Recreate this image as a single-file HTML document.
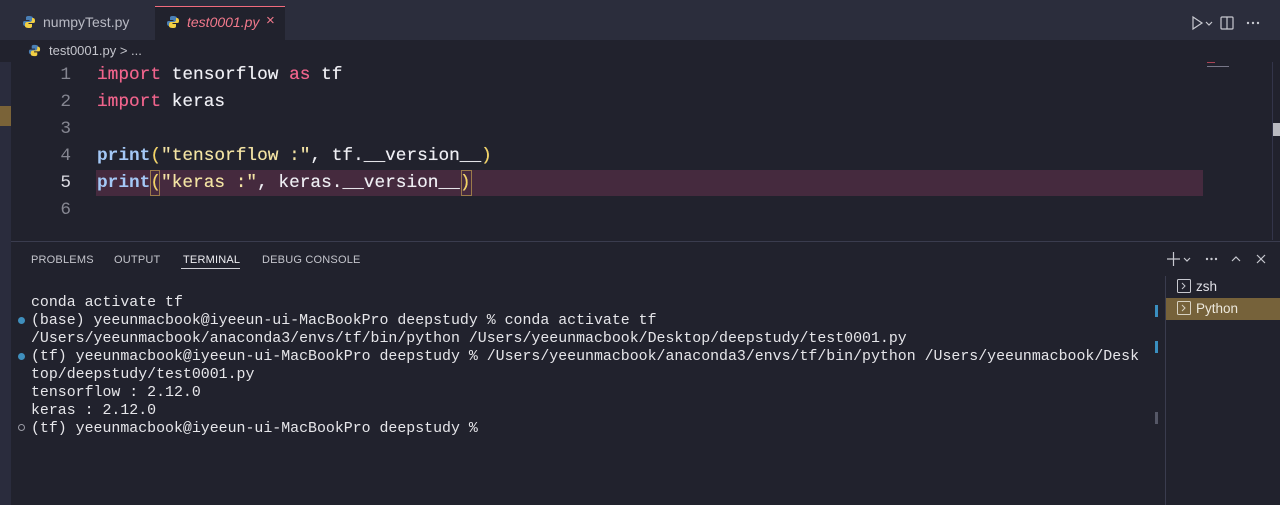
<!DOCTYPE html><html><head><style>
*{margin:0;padding:0;box-sizing:border-box}
body{width:1280px;height:505px;background:#21222d;overflow:hidden;position:relative;font-family:"Liberation Sans",sans-serif}
.a{position:absolute}
.mono{font-family:"Liberation Mono","DejaVu Sans Mono",monospace}
.code{font-size:17.8px;line-height:27px;white-space:pre;color:#eeeef3;text-shadow:0 0 .4px #eeeef3}
.k{color:#f0648c;text-shadow:0 0 .4px #f0648c}.p{color:#a4c8f6;font-weight:bold;text-shadow:none}.s{color:#f3e3a3;text-shadow:0 0 .4px #f3e3a3}.b{color:#f4d35e}
.ln{font-size:17.8px;line-height:27px;color:#858691;text-align:right;width:40px}
.term{font-size:14.9px;line-height:18px;color:#e6e6ea;white-space:pre}
.tab{font-size:11px;color:#c4c5cc;letter-spacing:.2px}
</style></head><body>
<div class="a" style="left:0;top:0;width:1280px;height:40px;background:#2b2d3c"></div>
<div class="a" style="left:155px;top:6px;width:130px;height:35px;background:#21222d;border-top:1px solid #f16b7d"></div>
<svg class="a" style="left:22px;top:15px" width="14" height="14" viewBox="0 0 14 14"><path d="M7 1C4 1 4 2 4 3v2h3.5v1H2.5C1 6 1 7.5 1 8.5S1.5 11 3 11h1V9c0-1 1-2 2-2h3c1 0 2-1 2-2V3C11 1.5 9 1 7 1z" fill="#4a7fb5"/><path d="M7 13c3 0 3-1 3-2V9H6.5V8h5c1.5 0 1.5-1.5 1.5-2.5S12.5 3 11 3h-1v2c0 1-1 2-2 2H5C4 7 3 8 3 9v2c0 1.5 2 2 4 2z" fill="#f2cf43"/></svg>
<div class="a" style="left:43px;top:14px;font-size:14px;color:#b9bac4">numpyTest.py</div>
<svg class="a" style="left:166px;top:15px" width="14" height="14" viewBox="0 0 14 14"><path d="M7 1C4 1 4 2 4 3v2h3.5v1H2.5C1 6 1 7.5 1 8.5S1.5 11 3 11h1V9c0-1 1-2 2-2h3c1 0 2-1 2-2V3C11 1.5 9 1 7 1z" fill="#4a7fb5"/><path d="M7 13c3 0 3-1 3-2V9H6.5V8h5c1.5 0 1.5-1.5 1.5-2.5S12.5 3 11 3h-1v2c0 1-1 2-2 2H5C4 7 3 8 3 9v2c0 1.5 2 2 4 2z" fill="#f2cf43"/></svg>
<div class="a" style="left:187px;top:14px;font-size:14px;color:#f2798c;font-style:italic">test0001.py</div>
<div class="a" style="left:266px;top:12px;font-size:15px;color:#f2798c">×</div>
<svg class="a" style="left:1190px;top:15px" width="90" height="16" viewBox="0 0 90 16" fill="none" stroke="#c8c9d0" stroke-width="1.2"><path d="M3 2l9 6-9 6z"/><path d="M16 7l3 3 3-3"/><rect x="31" y="2" width="12" height="12" rx="1"/><path d="M37 2v12"/><circle cx="58" cy="8" r=".6" fill="#c8c9d0"/><circle cx="63" cy="8" r=".6" fill="#c8c9d0"/><circle cx="68" cy="8" r=".6" fill="#c8c9d0"/></svg>
<svg class="a" style="left:28px;top:44px" width="13" height="13" viewBox="0 0 14 14"><path d="M7 1C4 1 4 2 4 3v2h3.5v1H2.5C1 6 1 7.5 1 8.5S1.5 11 3 11h1V9c0-1 1-2 2-2h3c1 0 2-1 2-2V3C11 1.5 9 1 7 1z" fill="#4a7fb5"/><path d="M7 13c3 0 3-1 3-2V9H6.5V8h5c1.5 0 1.5-1.5 1.5-2.5S12.5 3 11 3h-1v2c0 1-1 2-2 2H5C4 7 3 8 3 9v2c0 1.5 2 2 4 2z" fill="#f2cf43"/></svg>
<div class="a" style="left:49px;top:43px;font-size:13px;color:#c4c5cc">test0001.py &gt; ...</div>
<div class="a" style="left:0;top:62px;width:11px;height:443px;background:#2a2c3d"></div>
<div class="a" style="left:0;top:106px;width:11px;height:20px;background:#7a6338"></div>
<div class="a" style="left:1207px;top:62px;width:8px;height:1px;background:#a45"></div>
<div class="a" style="left:1207px;top:66px;width:22px;height:1px;background:#778"></div>
<div class="a" style="left:1272px;top:62px;width:1px;height:178px;background:#33354a"></div>
<div class="a" style="left:1273px;top:123px;width:7px;height:13px;background:#b9bac0"></div>
<div class="a" style="left:96px;top:170px;width:1107px;height:26px;background:#452a3e"></div>
<div class="a" style="left:150px;top:170px;width:10px;height:26px;border:1px solid #9b7a4a"></div>
<div class="a" style="left:461px;top:170px;width:11px;height:26px;border:1px solid #9b7a4a"></div>
<div class="a mono ln" style="left:31px;top:62px">1<br>2<br>3<br>4<br><span style="color:#dcdce3">5</span><br>6</div>
<div class="a mono code" style="left:97px;top:62px"><span class="k">import</span> tensorflow <span class="k">as</span> tf
<span class="k">import</span> keras

<span class="p">print</span><span class="b">(</span><span class="s">"tensorflow :"</span>, tf.__version__<span class="b">)</span>
<span class="p">print</span><span class="b">(</span><span class="s">"keras :"</span>, keras.__version__<span class="b">)</span>
</div>
<div class="a" style="left:11px;top:241px;width:1269px;height:1px;background:#3a3c4e"></div>
<div class="a tab" style="left:31px;top:254px">PROBLEMS</div>
<div class="a tab" style="left:114px;top:254px">OUTPUT</div>
<div class="a tab" style="left:183px;top:254px;color:#eeeef2">TERMINAL</div>
<div class="a" style="left:181px;top:268px;width:59px;height:1px;background:#d0d0d6"></div>
<div class="a tab" style="left:262px;top:254px">DEBUG CONSOLE</div>
<svg class="a" style="left:1165px;top:250px" width="115" height="18" viewBox="0 0 115 18" fill="none" stroke="#c8c9d0" stroke-width="1.2"><path d="M2 9h13M8.5 2v14"/><path d="M19 8l3 3 3-3"/><circle cx="42" cy="9" r=".6" fill="#c8c9d0"/><circle cx="46.5" cy="9" r=".6" fill="#c8c9d0"/><circle cx="51" cy="9" r=".6" fill="#c8c9d0"/><path d="M67 11l4-4 4 4"/><path d="M92 5l8 8M100 5l-8 8"/></svg>
<div class="a" style="left:1165px;top:276px;width:1px;height:229px;background:#3a3c4e"></div>
<div class="a" style="left:1166px;top:298px;width:114px;height:22px;background:#76623a"></div>
<svg class="a" style="left:1177px;top:279px" width="14" height="14" viewBox="0 0 14 14" fill="none" stroke="#c8c9d0"><rect x=".5" y=".5" width="13" height="13" rx="1"/><path d="M5 4l3 3-3 3"/></svg>
<div class="a" style="left:1196px;top:279px;font-size:13.5px;color:#e0e0e6">zsh</div>
<svg class="a" style="left:1177px;top:301px" width="14" height="14" viewBox="0 0 14 14" fill="none" stroke="#d8d2c2"><rect x=".5" y=".5" width="13" height="13" rx="1"/><path d="M5 4l3 3-3 3"/></svg>
<div class="a" style="left:1196px;top:301px;font-size:13.5px;color:#ece8dc">Python</div>
<div class="a" style="left:1155px;top:305px;width:3px;height:12px;background:#3a8fc0"></div>
<div class="a" style="left:1155px;top:341px;width:3px;height:12px;background:#3a8fc0"></div>
<div class="a" style="left:1155px;top:412px;width:3px;height:12px;background:#555766"></div>
<div class="a" style="left:18px;top:317px;width:7px;height:7px;border-radius:50%;background:#3f8fbd"></div>
<div class="a" style="left:18px;top:353px;width:7px;height:7px;border-radius:50%;background:#3f8fbd"></div>
<div class="a" style="left:18px;top:424px;width:7px;height:7px;border-radius:50%;border:1px solid #9a9ba5"></div>
<div class="a mono term" style="left:31px;top:294px">conda activate tf
(base) yeeunmacbook@iyeeun-ui-MacBookPro deepstudy % conda activate tf
/Users/yeeunmacbook/anaconda3/envs/tf/bin/python /Users/yeeunmacbook/Desktop/deepstudy/test0001.py
(tf) yeeunmacbook@iyeeun-ui-MacBookPro deepstudy % /Users/yeeunmacbook/anaconda3/envs/tf/bin/python /Users/yeeunmacbook/Desk
top/deepstudy/test0001.py
tensorflow : 2.12.0
keras : 2.12.0
(tf) yeeunmacbook@iyeeun-ui-MacBookPro deepstudy % </div>
</body></html>
